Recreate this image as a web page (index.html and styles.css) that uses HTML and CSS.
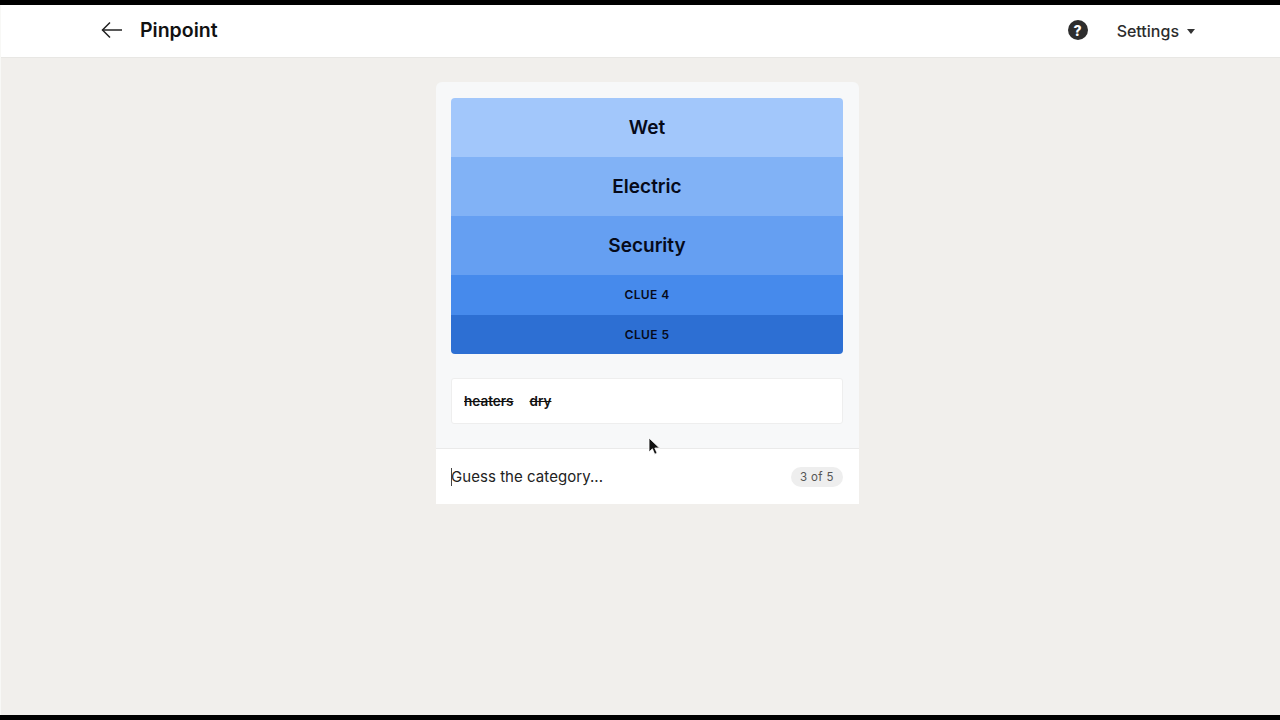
FILE: index.html
```html
<!DOCTYPE html>
<html lang="en">

<head>
    <meta charset="UTF-8">
    <meta name="viewport" content="width=device-width, initial-scale=1.0">
    <title>Pinpoint</title>
    <link rel="stylesheet" href="styles.css">
</head>

<body>
    <div class="app">
        <header class="topbar">
            <div class="topbar-left">
                <svg class="back-icon" width="24" height="20" viewBox="0 0 24 20" fill="none" stroke="currentColor" stroke-width="1.5">
                    <path d="M22 10H2.5" />
                    <path d="M10 2.5L2.5 10l7.5 7.5" />
                </svg>
                <h1 class="title">Pinpoint</h1>
            </div>
            <div class="topbar-right">
                <span class="help-icon">?</span>
                <div class="settings">
                    Settings
                    <span class="caret"></span>
                </div>
            </div>
        </header>

        <main class="content">
            <section class="card">
                <div class="card-body">
                    <div class="clues">
                        <div class="clue clue-1">Wet</div>
                        <div class="clue clue-2">Electric</div>
                        <div class="clue clue-3">Security</div>
                        <div class="clue clue-4 hidden-clue">CLUE 4</div>
                        <div class="clue clue-5 hidden-clue">CLUE 5</div>
                    </div>
                    <div class="guesses">
                        <span class="guess">heaters</span>
                        <span class="guess">dry</span>
                    </div>
                </div>
                <div class="card-footer">
                    <div class="guess-input"><span class="text-caret"></span>Guess the category...</div>
                    <span class="counter">3 of 5</span>
                </div>
            </section>
        </main>

        <!-- mouse pointer from the recording -->
        <svg class="pointer" width="13" height="19" viewBox="0 0 13 19">
            <path d="M1 1v14l3.4-3.2 2.3 5.4 2.4-1-2.3-5.2H11.500z" fill="#111" stroke="#fff" stroke-width="0.8" />
        </svg>
    </div>
</body>

</html>
```

FILE: styles.css
```css
* {
    margin: 0;
    padding: 0;
    box-sizing: border-box;
}

body {
    height: 100vh;
    padding: 5px 0;
    background: #000;
    font-family: Inter, 'Liberation Sans', sans-serif;
    color: #0a0a0a;
    overflow: hidden;
}

.app {
    position: relative;
    height: 100%;
    display: flex;
    flex-direction: column;
    background: #f1efec;
    border-left: 1px solid #f8f8f6;
}

.topbar {
    height: 53px;
    flex-shrink: 0;
    display: flex;
    justify-content: space-between;
    align-items: center;
    padding: 0 85px 2px 99px;
    background: #fff;
    border-bottom: 1px solid #e8e7e4;
}

.topbar-left {
    display: flex;
    align-items: center;
    gap: 16px;
}

.back-icon {
    color: #222;
}

.title {
    font-size: 19.5px;
    font-weight: 600;
    color: #111;
}

.topbar-right {
    display: flex;
    align-items: center;
    gap: 29px;
}

.help-icon {
    width: 20px;
    height: 20px;
    border-radius: 50%;
    display: flex;
    justify-content: center;
    align-items: center;
    background: #2e2e2e;
    color: #fff;
    font-size: 14px;
    font-weight: 800;
}

.settings {
    display: flex;
    align-items: center;
    gap: 8px;
    font-size: 16px;
    font-weight: 500;
    color: #2c2c2c;
    transform: translateY(1px);
}

.caret {
    width: 0;
    height: 0;
    border-left: 4.5px solid transparent;
    border-right: 4.5px solid transparent;
    border-top: 5px solid #333;
}

.content {
    flex: 1;
    display: flex;
    justify-content: center;
    align-items: flex-start;
    padding: 24px 0 0 14px;
}

.card {
    width: 423px;
    border-radius: 6px 6px 0 0;
    background: #f7f8f9;
}

.card-body {
    padding: 16px 16px 24px 15px;
}

.clues {
    border-radius: 4px;
    overflow: hidden;
}

.clue {
    height: 59px;
    display: flex;
    justify-content: center;
    align-items: center;
    font-size: 19px;
    font-weight: 600;
    color: #060a1a;
}

.clue-1 {
    background: #a2c7fb;
}

.clue-2 {
    background: #81b2f6;
}

.clue-3 {
    background: #659ff2;
}

.clue-4 {
    background: #468aec;
}

.clue-5 {
    background: #2d6fd3;
}

.hidden-clue {
    height: 39.5px;
    font-size: 12px;
    letter-spacing: 0.4px;
}

.guesses {
    height: 46px;
    margin-top: 24px;
    display: flex;
    align-items: center;
    gap: 16px;
    padding: 0 12px;
    background: #fff;
    border: 1px solid #eeeeee;
    border-radius: 3px;
}

.guess {
    font-size: 13.5px;
    font-weight: 600;
    color: #111;
    text-decoration: line-through;
}

.card-footer {
    height: 56px;
    display: flex;
    justify-content: space-between;
    align-items: center;
    padding: 0 16px 0 15px;
    background: #fff;
    border-top: 1px solid #eaeaea;
}

.guess-input {
    display: flex;
    align-items: center;
    font-size: 15px;
    letter-spacing: 0.05px;
    color: #222;
}

.text-caret {
    width: 1px;
    height: 18px;
    margin-right: -1px;
    background: #444;
}

.counter {
    height: 20px;
    display: flex;
    align-items: center;
    padding: 0 9px;
    border-radius: 10px;
    background: #eeeeee;
    font-size: 11.5px;
    letter-spacing: 0.4px;
    color: #555;
}

.pointer {
    position: absolute;
    left: 647px;
    top: 432px;
}
```
